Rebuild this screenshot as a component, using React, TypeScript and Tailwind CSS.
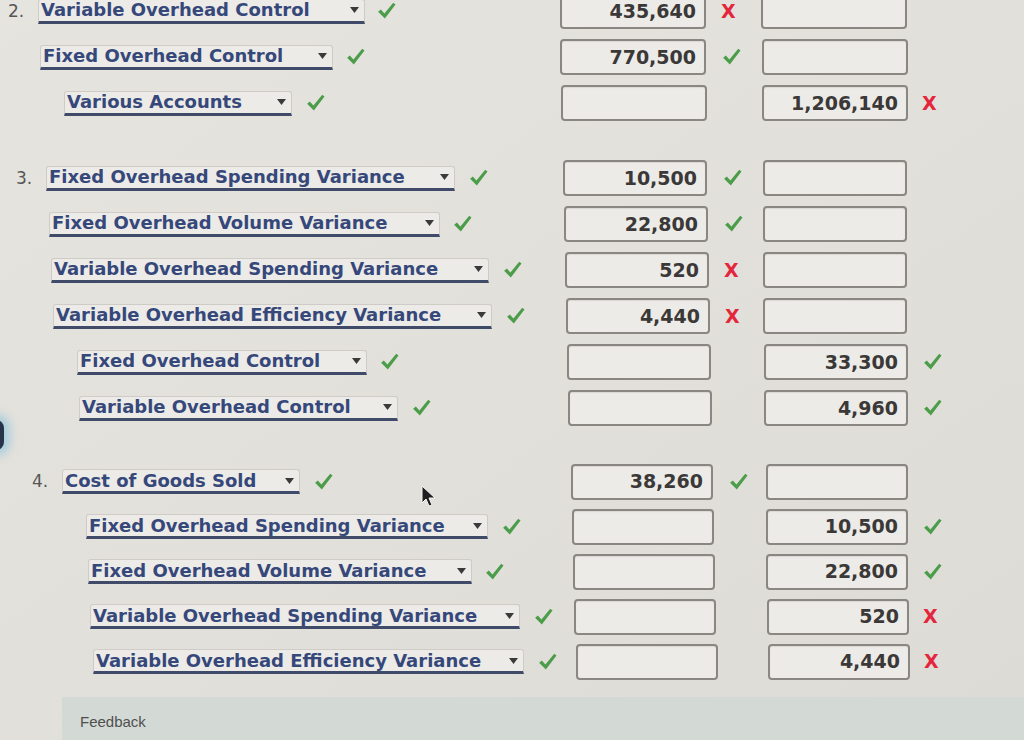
import * as React from "react";

// ─── Journal entry rows ───────────────────────────────────────────────────────

type Mark = "ok" | "bad" | null;

interface Row {
  num?: string;
  pad: string; // left padding of the row
  selW: string; // select width
  gap: string; // select → check spacing
  left: string; // width of the account block (puts the debit box in place)
  mid: string; // space between the debit and credit boxes
  label: string;
  debit?: string;
  debitMark: Mark;
  credit?: string;
  creditMark: Mark;
}

const GROUP_2: Row[] = [
  { num: "2.", pad: "pl-[8px]", selW: "w-[327px]", gap: "ml-[11px]", left: "w-[560px]", mid: "w-[55px]", label: "Variable Overhead Control", debit: "435,640", debitMark: "bad", creditMark: null },
  { pad: "pl-[40px]", selW: "w-[293px]", gap: "ml-[12px]", left: "w-[560px]", mid: "w-[56px]", label: "Fixed Overhead Control", debit: "770,500", debitMark: "ok", creditMark: null },
  { pad: "pl-[64px]", selW: "w-[228px]", gap: "ml-[13px]", left: "w-[561px]", mid: "w-[55px]", label: "Various Accounts", debitMark: null, credit: "1,206,140", creditMark: "bad" },
];

const GROUP_3: Row[] = [
  { num: "3.", pad: "pl-[16px]", selW: "w-[409px]", gap: "ml-[13px]", left: "w-[563px]", mid: "w-[56px]", label: "Fixed Overhead Spending Variance", debit: "10,500", debitMark: "ok", creditMark: null },
  { pad: "pl-[49px]", selW: "w-[391px]", gap: "ml-[12px]", left: "w-[564px]", mid: "w-[55px]", label: "Fixed Overhead Volume Variance", debit: "22,800", debitMark: "ok", creditMark: null },
  { pad: "pl-[51px]", selW: "w-[438px]", gap: "ml-[13px]", left: "w-[565px]", mid: "w-[54px]", label: "Variable Overhead Spending Variance", debit: "520", debitMark: "bad", creditMark: null },
  { pad: "pl-[53px]", selW: "w-[439px]", gap: "ml-[13px]", left: "w-[566px]", mid: "w-[53px]", label: "Variable Overhead Efficiency Variance", debit: "4,440", debitMark: "bad", creditMark: null },
  { pad: "pl-[77px]", selW: "w-[290px]", gap: "ml-[12px]", left: "w-[567px]", mid: "w-[53px]", label: "Fixed Overhead Control", debitMark: null, credit: "33,300", creditMark: "ok" },
  { pad: "pl-[79px]", selW: "w-[319px]", gap: "ml-[13px]", left: "w-[568px]", mid: "w-[52px]", label: "Variable Overhead Control", debitMark: null, credit: "4,960", creditMark: "ok" },
];

const GROUP_4: Row[] = [
  { num: "4.", pad: "pl-[32px]", selW: "w-[238px]", gap: "ml-[13px]", left: "w-[571px]", mid: "w-[53px]", label: "Cost of Goods Sold", debit: "38,260", debitMark: "ok", creditMark: null },
  { pad: "pl-[86px]", selW: "w-[402px]", gap: "ml-[13px]", left: "w-[572px]", mid: "w-[52px]", label: "Fixed Overhead Spending Variance", debitMark: null, credit: "10,500", creditMark: "ok" },
  { pad: "pl-[88px]", selW: "w-[384px]", gap: "ml-[12px]", left: "w-[573px]", mid: "w-[51px]", label: "Fixed Overhead Volume Variance", debitMark: null, credit: "22,800", creditMark: "ok" },
  { pad: "pl-[90px]", selW: "w-[430px]", gap: "ml-[13px]", left: "w-[574px]", mid: "w-[51px]", label: "Variable Overhead Spending Variance", debitMark: null, credit: "520", creditMark: "bad" },
  { pad: "pl-[93px]", selW: "w-[431px]", gap: "ml-[13px]", left: "w-[576px]", mid: "w-[50px]", label: "Variable Overhead Efficiency Variance", debitMark: null, credit: "4,440", creditMark: "bad" },
];

const VERDANA = "font-['DejaVu_Sans','Verdana',sans-serif]";

// ─── Bits ─────────────────────────────────────────────────────────────────────

function Check() {
  return (
    <svg width="21" height="20" viewBox="0 0 20 19" className="shrink-0">
      <path d="M2 10.2 L4.6 8.1 L8 11.8 L16.4 1.6 L18.6 3.4 L8.4 16.6 Z" fill="#4c9d4a" />
    </svg>
  );
}

function Cross() {
  return (
    <span className={`${VERDANA} text-[19px] leading-none font-bold text-[#e4263c]`}>X</span>
  );
}

function MarkIcon({ mark }: { mark: Mark }) {
  if (mark === "ok") return <Check />;
  if (mark === "bad") return <Cross />;
  return null;
}

function AccountSelect({ label, width }: { label: string; width: string }) {
  return (
    <div
      className={`${width} h-[25px] flex items-center justify-between bg-[#ecebe8] border border-[#cfccc7] border-b-[3px] border-b-[#3f4b69] rounded-t-[3px] pl-[2px] pr-[5px]`}
    >
      <span className={`${VERDANA} text-[18px] font-bold text-[#36487a] whitespace-nowrap leading-none`}>
        {label}
      </span>
      <svg width="9" height="6" viewBox="0 0 9 6" className="shrink-0">
        <path d="M0 0 H9 L4.5 6 Z" fill="#3a3a3a" />
      </svg>
    </div>
  );
}

function AmountBox({ value, width }: { value?: string; width: string }) {
  return (
    <div className={`${width} h-[36px] shrink-0 flex items-center justify-end pr-[8px] rounded-[4px] border-2 border-[#8a8681] bg-[#ecebe7] shadow-[inset_0_1px_1px_rgba(0,0,0,0.08)]`}>
      <span className={`${VERDANA} text-[19px] font-bold text-[#3b3838] leading-none`}>{value}</span>
    </div>
  );
}

function EntryRow({ row, height, box }: { row: Row; height: string; box: string }) {
  return (
    <div className={`flex items-center ${height}`}>
      <div className={`${row.left} ${row.pad} shrink-0 flex items-center`}>
        {row.num && (
          <span className={`${VERDANA} w-[30px] text-[17px] text-[#555] leading-none`}>{row.num}</span>
        )}
        <AccountSelect label={row.label} width={row.selW} />
        <div className={`${row.gap} flex items-center`}>
          <Check />
        </div>
      </div>
      <AmountBox value={row.debit} width={box} />
      <div className={`${row.mid} shrink-0 flex items-center pl-[15px]`}>
        <MarkIcon mark={row.debitMark} />
      </div>
      <AmountBox value={row.credit} width={box} />
      <div className="flex items-center pl-[14px]">
        <MarkIcon mark={row.creditMark} />
      </div>
    </div>
  );
}

// ─── Page ─────────────────────────────────────────────────────────────────────

export default function App() {
  return (
    <div className="relative w-[1024px] h-[740px] overflow-hidden bg-gradient-to-br from-[#e6e4df] via-[#e2e0db] to-[#dddbd5]">
      <div className="-mt-[12px]">
        {GROUP_2.map((r) => (
          <EntryRow key={r.label + r.pad} row={r} height="h-[46px]" box="w-[146px]" />
        ))}
        <div className="mt-[29px]">
          {GROUP_3.map((r) => (
            <EntryRow key={r.label + r.pad} row={r} height="h-[46px]" box="w-[144px]" />
          ))}
        </div>
        <div className="mt-[28px]">
          {GROUP_4.map((r) => (
            <EntryRow key={r.label + r.pad} row={r} height="h-[45px]" box="w-[142px]" />
          ))}
        </div>
        <div className="mt-[13px] ml-[62px] h-[60px] bg-[#d3dad5] pl-[18px] pt-[12px]">
          <span className="font-['Liberation_Sans',Arial,sans-serif] text-[15px] text-[#4f4f4f]">Feedback</span>
        </div>
      </div>

      {/* mouse pointer */}
      <svg width="16" height="24" viewBox="0 0 16 24" className="absolute left-[421px] top-[485px]">
        <path d="M1 1 L1 18 L5 14 L8 21 L11 20 L8 13 L14 13 Z" fill="#1e1e1e" stroke="#f4f4f4" strokeWidth="1" />
      </svg>

      {/* glare at the left edge of the photo */}
      <div className="absolute -left-[12px] top-[420px] w-[16px] h-[30px] rounded-full bg-[#27344a] shadow-[0_0_10px_6px_rgba(120,190,220,0.55)]" />
    </div>
  );
}
